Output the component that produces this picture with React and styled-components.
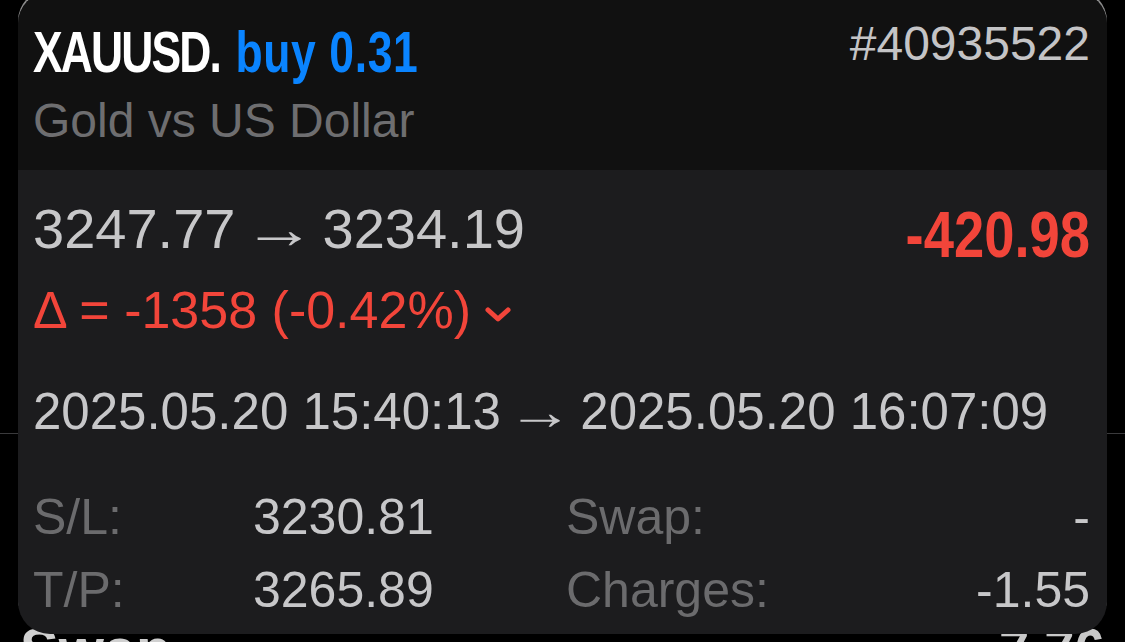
import React from 'react';
import styled, { createGlobalStyle } from 'styled-components';

const GlobalStyle = createGlobalStyle`
  html, body {
    margin: 0;
    padding: 0;
    background: #000;
  }
  body {
    font-family: "Liberation Sans", Arial, sans-serif;
    -webkit-font-smoothing: antialiased;
  }
`;

const Screen = styled.div`
  position: relative;
  width: 1125px;
  height: 642px;
  overflow: hidden;
  background: #000;
`;

// list underneath the popup
const BackList = styled.div`
  display: flex;
  flex-direction: column;
  padding-top: 433px;
`;

const Divider = styled.div`
  height: 1px;
  background: #3a3a3c;
`;

const BackRow = styled.div`
  display: flex;
  justify-content: space-between;
  align-items: flex-start;
  padding: 0 20px;
  margin-top: 186px;
  line-height: 1;
`;

const BackLabel = styled.span`
  font-size: 58px;
  font-weight: 600;
  color: #d0d0d0;
`;

const BackValue = styled.span`
  display: inline-block;
  font-size: 64px;
  font-weight: 700;
  color: #c8c8c8;
  transform: scaleX(0.85);
  transform-origin: right center;
`;

const Card = styled.div`
  position: absolute;
  top: -8px;
  left: 18px;
  width: 1089px;
  height: 642px;
  border-radius: 32px;
  overflow: hidden;
  background: #1c1c1e;
  box-shadow: 0 -3px 0 0 #8a8a8a;
  display: flex;
  flex-direction: column;
`;

const Header = styled.div`
  height: 178px;
  box-sizing: border-box;
  background: #111111;
  padding: 28px 17px 0 15px;
  display: flex;
  justify-content: space-between;
  align-items: flex-start;
`;

const TitleBlock = styled.div`
  display: flex;
  flex-direction: column;
`;

const Title = styled.div`
  margin-top: 4px;
  font-weight: 700;
  font-size: 57px;
  line-height: 1;
  color: #ffffff;
  white-space: nowrap;
  transform: scaleX(0.78);
  transform-origin: left center;
`;

const Symbol = styled.span`
  letter-spacing: -2.4px;
  margin-right: 4px;
`;

const Side = styled.span`
  color: #0a84ff;
  letter-spacing: 0.8px;
`;

const Subtitle = styled.div`
  margin-top: 16px;
  font-size: 48px;
  line-height: 1;
  color: #6e6e70;
`;

const Ticket = styled.div`
  font-size: 48px;
  line-height: 1;
  color: #c4c4c6;
`;

const Body = styled.div`
  flex: 1;
  padding: 31px 17px 0 15px;
  display: flex;
  flex-direction: column;
`;

const PriceRow = styled.div`
  display: flex;
  justify-content: space-between;
  align-items: flex-start;
`;

const Prices = styled.div`
  font-size: 56px;
  line-height: 1;
  color: #c7c7c9;
  white-space: nowrap;
`;

const Arrow = styled.span`
  display: inline-block;
  transform: scaleX(1.3);
`;

const Profit = styled.div`
  margin-top: 2px;
  font-weight: 700;
  font-size: 64px;
  line-height: 1;
  color: ${p => (p.$loss ? '#f2453a' : '#0a84ff')};
  transform: scaleX(0.85);
  transform-origin: right center;
`;

const Delta = styled.div`
  margin-top: 17px;
  display: flex;
  align-items: center;
  gap: 14px;
  font-size: 52px;
  line-height: 1;
  color: #f2453a;
  white-space: nowrap;
`;

const Times = styled.div`
  margin-top: 50px;
  font-size: 51px;
  line-height: 1;
  color: #c7c7c9;
  white-space: nowrap;
`;

const Stats = styled.div`
  margin-top: 55px;
  display: grid;
  grid-template-columns: 220px 313px 1fr auto;
  row-gap: 23px;
  font-size: 50px;
  line-height: 1;
`;

const StatLabel = styled.span`
  color: #6b6b6d;
`;

const StatValue = styled.span`
  color: #c7c7c9;
  text-align: ${p => (p.$right ? 'right' : 'left')};
`;

const Chevron = () => (
  <svg width="26" height="16" viewBox="0 0 26 16" style={{ marginTop: 10 }}>
    <polyline
      points="3,3 13,12 23,3"
      fill="none"
      stroke="#f2453a"
      strokeWidth="5"
      strokeLinecap="round"
      strokeLinejoin="round"
    />
  </svg>
);

const stats = [
  ['S/L:', '3230.81', 'Swap:', '-'],
  ['T/P:', '3265.89', 'Charges:', '-1.55'],
];

export default function App() {
  return (
    <Screen>
      <GlobalStyle />
      <BackList>
        <Divider />
        <BackRow>
          <BackLabel>Swap</BackLabel>
          <BackValue>-7.76</BackValue>
        </BackRow>
      </BackList>
      <Card>
        <Header>
          <TitleBlock>
            <Title>
              <Symbol>XAUUSD.</Symbol> <Side>buy 0.31</Side>
            </Title>
            <Subtitle>Gold vs US Dollar</Subtitle>
          </TitleBlock>
          <Ticket>#40935522</Ticket>
        </Header>
        <Body>
          <PriceRow>
            <Prices>
              3247.77 <Arrow>→</Arrow> 3234.19
            </Prices>
            <Profit $loss>-420.98</Profit>
          </PriceRow>
          <Delta>
            Δ = -1358 (-0.42%)
            <Chevron />
          </Delta>
          <Times>
            2025.05.20 15:40:13 <Arrow>→</Arrow> 2025.05.20 16:07:09
          </Times>
          <Stats>
            {stats.map(row => (
              <React.Fragment key={row[0]}>
                <StatLabel>{row[0]}</StatLabel>
                <StatValue>{row[1]}</StatValue>
                <StatLabel>{row[2]}</StatLabel>
                <StatValue $right>{row[3]}</StatValue>
              </React.Fragment>
            ))}
          </Stats>
        </Body>
      </Card>
    </Screen>
  );
}
